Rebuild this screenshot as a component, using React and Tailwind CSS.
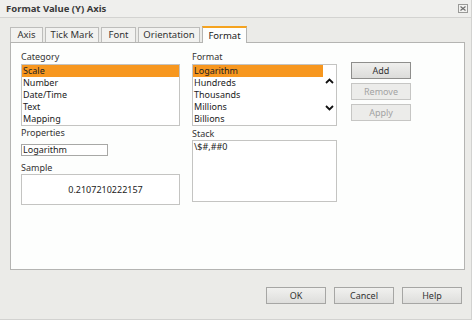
import React from "react";

const font = { fontFamily: '"Noto Sans", "DejaVu Sans", sans-serif' };

function Tab({ label, w, active }) {
  if (active) {
    return (
      <div
        className={`${w} h-[17px] -mb-px bg-[#fdfefd] border border-b-0 border-[#b4b4b2] border-t-2 border-t-[#f5a31f] flex items-center justify-center text-[9.5px] text-[#222] leading-none relative z-10`}
      >
        {label}
      </div>
    );
  }
  return (
    <div
      className={`${w} h-[15px] bg-[#f2f2f0] border border-b-0 border-[#bdbdbb] flex items-center justify-center text-[9.5px] text-[#333] leading-none`}
    >
      {label}
    </div>
  );
}

function Btn({ label, disabled, strong }) {
  return (
    <div
      className={`w-[60px] h-[17px] flex items-center justify-center text-[9px] leading-none border ${
        disabled
          ? "border-[#c6c6c4] text-[#a3a3a3] bg-[#ececea]"
          : strong
          ? "border-[#8e8e8c] text-[#333] bg-gradient-to-b from-[#efefed] to-[#dcdcda]"
          : "border-[#a6a6a4] text-[#333] bg-gradient-to-b from-[#f1f1ef] to-[#dededc]"
      }`}
    >
      {label}
    </div>
  );
}

function Row({ children, sel, w }) {
  return (
    <div
      className={`h-[12px] leading-[12px] text-[9px] pl-[1px] ${w || ""} ${
        sel ? "bg-[#f7971f] text-[#222]" : "text-[#222]"
      }`}
    >
      {children}
    </div>
  );
}

export default function App() {
  return (
    <div className="w-[474px] h-[322px] bg-white" style={font}>
      <div className="w-[472px] h-[320px] bg-[#ebebe8] border-r border-b border-[#d2d2d0] flex flex-col">
        {/* title bar */}
        <div className="h-[18px] shrink-0 border-b border-[#d3d3d1] bg-[#efefed] flex items-center justify-between pl-[6px] pr-[3px]">
          <span className="text-[9.5px] font-bold text-[#3a3a3a] leading-none">
            Format Value (Y) Axis
          </span>
          <div className="w-[10px] h-[9px] border border-[#9a9a98] bg-[#f2f2f0] flex items-center justify-center">
            <svg width="6" height="5" viewBox="0 0 6 5">
              <path d="M0.5 0.5 L5.5 4.5 M5.5 0.5 L0.5 4.5" stroke="#6a6a6a" strokeWidth="1.1" />
            </svg>
          </div>
        </div>

        {/* tabs */}
        <div className="pl-[10px] pt-[8px] flex items-end gap-[2px]">
          <Tab label="Axis" w="w-[33px]" />
          <Tab label="Tick Mark" w="w-[54px]" />
          <Tab label="Font" w="w-[35px]" />
          <Tab label="Orientation" w="w-[62px]" />
          <Tab label="Format" w="w-[45px]" active />
        </div>

        {/* panel */}
        <div className="ml-[10px] w-[455px] h-[228px] bg-[#fdfefd] border border-[#b4b4b2] flex pl-[10px] pt-[8px]">
          {/* left column */}
          <div className="w-[159px] flex flex-col">
            <div className="h-[12px] leading-[12px] text-[9px] text-[#333]">Category</div>
            <div className="mt-[1px] h-[62px] border border-[#c4c4c2] bg-white">
              <Row sel>Scale</Row>
              <Row>Number</Row>
              <Row>Date/Time</Row>
              <Row>Text</Row>
              <Row>Mapping</Row>
            </div>
            <div className="mt-[1px] h-[12px] leading-[12px] text-[9px] text-[#333]">Properties</div>
            <div className="mt-[5px] w-[87px] h-[12px] border border-[#a8a8a6] bg-white text-[9px] leading-[10px] pl-[1px] text-[#222]">
              Logarithm
            </div>
            <div className="mt-[6px] h-[11px] leading-[11px] text-[9px] text-[#333]">Sample</div>
            <div className="mt-[1px] h-[31px] border border-[#c4c4c2] bg-white flex items-center justify-center text-[9px] text-[#222] pl-[10px]">
              0.2107210222157
            </div>
          </div>

          {/* middle column */}
          <div className="ml-[12px] w-[145px] flex flex-col">
            <div className="h-[12px] leading-[12px] text-[9px] text-[#333]">Format</div>
            <div className="mt-[1px] h-[62px] border border-[#c4c4c2] bg-white flex">
              <div className="w-[130px]">
                <Row sel>Logarithm</Row>
                <Row>Hundreds</Row>
                <Row>Thousands</Row>
                <Row>Millions</Row>
                <Row>Billions</Row>
              </div>
              <div className="flex-1 flex flex-col items-center pt-[13px]">
                <svg width="9" height="6" viewBox="0 0 9 6">
                  <path d="M1 5 L4.5 1.5 L8 5" fill="none" stroke="#111" strokeWidth="1.8" />
                </svg>
                <div className="h-[21px]" />
                <svg width="9" height="6" viewBox="0 0 9 6">
                  <path d="M1 1 L4.5 4.5 L8 1" fill="none" stroke="#111" strokeWidth="1.8" />
                </svg>
              </div>
            </div>
            <div className="mt-[2px] h-[12px] leading-[12px] text-[9px] text-[#333]">Stack</div>
            <div className="h-[62px] border border-[#c4c4c2] bg-white text-[9px] leading-[12px] pl-[1px] text-[#222]">
              \$#,##0
            </div>
          </div>

          {/* buttons column */}
          <div className="ml-[14px] w-[60px] flex flex-col gap-[4px] pt-[11px]">
            <Btn label="Add" strong />
            <Btn label="Remove" disabled />
            <Btn label="Apply" disabled />
          </div>
        </div>

        {/* bottom buttons */}
        <div className="mt-[17px] flex justify-end gap-[8px] pr-[9px]">
          <Btn label="OK" />
          <Btn label="Cancel" />
          <Btn label="Help" />
        </div>
      </div>
    </div>
  );
}
